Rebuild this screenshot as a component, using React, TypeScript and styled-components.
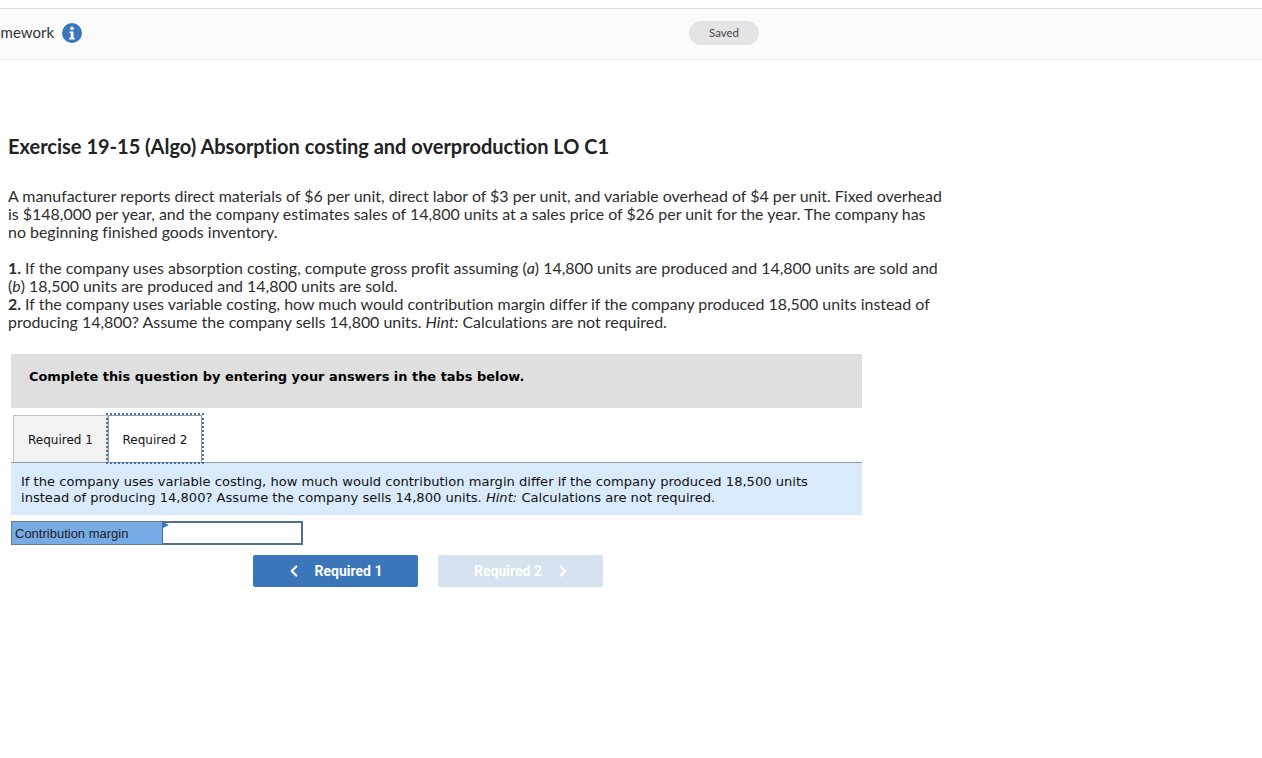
import styled, { createGlobalStyle } from "styled-components";
import { ChevronLeft, ChevronRight } from "lucide-react";

const GlobalStyle = createGlobalStyle`
  html, body {
    margin: 0;
    padding: 0;
    background: #fff;
  }
`;

const Page = styled.div`
  padding-top: 8px;
  height: 750px;
  overflow: hidden;
  color: #2d2d2d;
  font-family: "Lato", sans-serif;
  font-variant-ligatures: none;
`;

const HeaderBar = styled.header`
  height: 48px;
  padding-bottom: 2px;
  display: flex;
  align-items: center;
  background: #fbfbfc;
  border-top: 1px solid #dcdcdc;
  border-bottom: 1px solid #eeeeee;
`;

const HeaderTitle = styled.div`
  width: 54px;
  padding-bottom: 2px;
  display: flex;
  justify-content: flex-end;
  overflow: hidden;
  font-size: 15px;
  color: #333;
`;

const InfoBadge = styled.svg`
  width: 20px;
  height: 20px;
  margin-left: 8px;
`;

const SavedPill = styled.div`
  width: 70px;
  height: 24px;
  box-sizing: border-box;
  padding-bottom: 2px;
  margin-left: 607px;
  border-radius: 12px;
  background: #e4e3e6;
  display: flex;
  align-items: center;
  justify-content: center;
  font-size: 11.5px;
  color: #444;
`;

const Content = styled.main`
  padding: 74px 0 0 8px;
`;

const Title = styled.h1`
  margin: 0 0 29px;
  font-size: 20px;
  line-height: 24px;
  font-weight: 700;
  color: #222;
`;

const Prose = styled.p`
  width: 960px;
  margin: 0 0 18px;
  font-size: 15.95px;
  line-height: 18px;
`;

const QuestionArea = styled.section`
  width: 851px;
  margin: 23px 0 0 3px;
  font-family: "DejaVu Sans", sans-serif;
`;

const Callout = styled.div`
  height: 54px;
  box-sizing: border-box;
  padding: 0 0 9px 18px;
  display: flex;
  align-items: center;
  background: #dfdfdf;
  color: #000;
  font-size: 12.93px;
  font-weight: 700;
`;

const TabRow = styled.div`
  display: flex;
  height: 47px;
  margin-top: 7px;
  padding-left: 2px;
  border-bottom: 1px solid #999;
`;

const Tab = styled.div<{ $active?: boolean }>`
  position: relative;
  box-sizing: border-box;
  width: ${(p) => (p.$active ? "94px" : "95px")};
  height: 47px;
  padding-top: 2px;
  display: flex;
  align-items: center;
  justify-content: center;
  font-size: 12px;
  color: #111;
  background: ${(p) => (p.$active ? "#fff" : "#f2f2f2")};
  border: 1px solid ${(p) => (p.$active ? "#999" : "#c4c4c4")};
  border-bottom: none;
  outline: ${(p) => (p.$active ? "2px dotted #3b76bb" : "none")};
`;

const Prompt = styled.div`
  height: 52px;
  box-sizing: border-box;
  padding: 11px 10px 0;
  background: #d9ebfa;
  color: #111;
  font-size: 13.08px;
  line-height: 16px;
`;

const AnswerRow = styled.div`
  display: flex;
  width: 292px;
  height: 24px;
  margin-top: 6px;
  font-family: "Liberation Sans", sans-serif;
`;

const AnswerLabel = styled.div`
  width: 151px;
  box-sizing: border-box;
  padding-left: 3px;
  display: flex;
  align-items: center;
  background: #77abe6;
  border: 1px solid #6b7a90;
  border-right: none;
  font-size: 13px;
  color: #222;
`;

const AnswerCell = styled.div`
  position: relative;
  flex: 1;
  box-sizing: border-box;
  background: #fff;
  border: 2px solid #4f6f96;
  border-left: 1px solid #3b76bb;

  &::before {
    content: "";
    position: absolute;
    top: -1px;
    left: 0;
    border-left: 6px solid #3b76bb;
    border-top: 3px solid transparent;
    border-bottom: 3px solid transparent;
  }
`;

const NavRow = styled.nav`
  display: flex;
  gap: 20px;
  margin: 10px 0 0 242px;
`;

const NavButton = styled.div<{ $disabled?: boolean }>`
  width: 165px;
  height: 32px;
  box-sizing: border-box;
  padding: ${(p) => (p.$disabled ? "0 0 0 5px" : "0 4px 0 0")};
  display: flex;
  align-items: center;
  justify-content: center;
  gap: 12px;
  border-radius: 2px;
  font-family: "Roboto", sans-serif;
  font-size: 14px;
  font-weight: 700;
  color: #fff;
  background: ${(p) => (p.$disabled ? "#d7e2f0" : "#3b76bb")};
`;

export default function App() {
  return (
    <Page>
      <GlobalStyle />
      <HeaderBar>
        <HeaderTitle>
          <span>Homework</span>
        </HeaderTitle>
        <InfoBadge viewBox="0 0 20 20">
          <circle cx="10" cy="10" r="10" fill="#3b76bb" />
          <circle cx="10" cy="5.4" r="1.8" fill="#fff" />
          <path d="M7.5 8.4h4v6.4h1.3v1.6H7.3v-1.6h1.4v-4.8H7.5z" fill="#fff" />
        </InfoBadge>
        <SavedPill>Saved</SavedPill>
      </HeaderBar>
      <Content>
        <Title>Exercise 19-15 (Algo) Absorption costing and overproduction LO C1</Title>
        <Prose>
          A manufacturer reports direct materials of $6 per unit, direct labor of $3 per unit, and
          variable overhead of $4 per unit. Fixed overhead
          <br />
          is $148,000 per year, and the company estimates sales of 14,800 units at a sales price of
          $26 per unit for the year. The company has
          <br />
          no beginning finished goods inventory.
        </Prose>
        <Prose>
          <b>1.</b> If the company uses absorption costing, compute gross profit assuming (<i>a</i>)
          14,800 units are produced and 14,800 units are sold and
          <br />(<i>b</i>) 18,500 units are produced and 14,800 units are sold.
          <br />
          <b>2.</b> If the company uses variable costing, how much would contribution margin differ
          if the company produced 18,500 units instead of
          <br />
          producing 14,800? Assume the company sells 14,800 units. <i>Hint:</i> Calculations are not
          required.
        </Prose>
        <QuestionArea>
          <Callout>Complete this question by entering your answers in the tabs below.</Callout>
          <TabRow>
            <Tab>Required 1</Tab>
            <Tab $active>Required 2</Tab>
          </TabRow>
          <Prompt>
            If the company uses variable costing, how much would contribution margin differ if the
            company produced 18,500 units
            <br />
            instead of producing 14,800? Assume the company sells 14,800 units. <i>Hint:</i>{" "}
            Calculations are not required.
          </Prompt>
          <AnswerRow>
            <AnswerLabel>Contribution margin</AnswerLabel>
            <AnswerCell />
          </AnswerRow>
          <NavRow>
            <NavButton>
              <ChevronLeft size={18} strokeWidth={3} />
              Required 1
            </NavButton>
            <NavButton $disabled>
              Required 2
              <ChevronRight size={18} strokeWidth={3} />
            </NavButton>
          </NavRow>
        </QuestionArea>
      </Content>
    </Page>
  );
}
